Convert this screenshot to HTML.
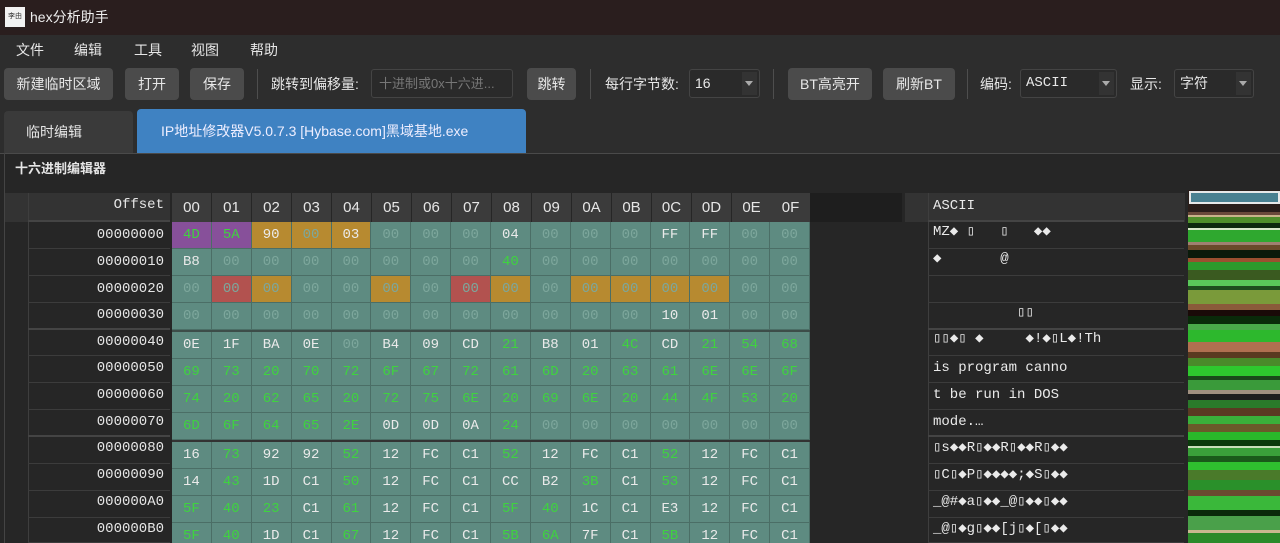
<!DOCTYPE html>
<html><head><meta charset="utf-8"><style>
*{margin:0;padding:0;box-sizing:border-box}
html,body{width:1280px;height:543px;overflow:hidden}
body{background:#2d2d2d;font-family:"Liberation Sans","Noto Sans CJK SC",sans-serif;color:#e6e6e6;position:relative}
.a{position:absolute}
.btn{position:absolute;top:68px;height:32px;background:#4b4b4b;border-radius:4px;font-size:14px;line-height:32px;text-align:center;color:#e8e8e8}
.sep{position:absolute;top:69px;width:1px;height:30px;background:#4e4e4e}
.lbl{position:absolute;top:68px;line-height:32px;font-size:14px;color:#e8e8e8}
.cb{position:absolute;top:69px;height:29px;background:#2a2a2a;border:1px solid #444;border-radius:3px;font-size:14px;line-height:27px;padding-left:5px;color:#e8e8e8}
.cb i{position:absolute;right:2px;top:2px;width:15px;height:23px;background:#333}
.cb i:after{content:"";position:absolute;left:3px;top:9px;border-left:4px solid transparent;border-right:4px solid transparent;border-top:5px solid #aaa}
.mono{font-family:"Liberation Mono","DejaVu Sans Mono",monospace}
#hex{position:absolute;left:172px;top:222px;width:638px}
.r{display:flex;height:27px}
.r div{width:40px;height:27px;background:#5e8b81;border-right:1px solid #4b6e66;border-bottom:1px solid #4b6e66;text-align:center;line-height:27px;font-size:14px;color:#eaeaea;font-family:"Liberation Mono",monospace}
.r .f{color:#7da79c}.r .g{color:#3fd33f}.r .p{background:#87509a}.r .o{background:#b78a30}.r .d{background:#b2524f}
.gap{height:2px;background:#3d4d49}
.hh{position:absolute;top:193px;height:29px;width:39px;background:#3b3b3b;text-align:center;line-height:29px;font-size:15px;color:#e6e6e6}
.off{position:absolute;left:28px;width:142px;text-align:right;font-size:14px;color:#e6e6e6;padding-right:6px;border-bottom:1px solid #3c3c3c}
.asc{position:absolute;left:928px;width:256px;font-size:14px;color:#eaeaea;padding-left:5px;border-bottom:1px solid #3c3c3c;white-space:pre}
</style></head><body>
<div class="a" style="left:0;top:0;width:1280px;height:35px;background:#2a1e1e"></div>
<div class="a" style="left:5px;top:7px;width:20px;height:20px;background:#f2f2f2;font-size:7px;color:#333;line-height:20px;text-align:center">李由</div>
<div class="a" style="left:30px;top:7px;font-size:14px;line-height:20px;color:#eee">hex分析助手</div>
<div class="a" style="top:41px;left:16px;font-size:14px;line-height:18px">文件</div>
<div class="a" style="top:41px;left:74px;font-size:14px;line-height:18px">编辑</div>
<div class="a" style="top:41px;left:134px;font-size:14px;line-height:18px">工具</div>
<div class="a" style="top:41px;left:191px;font-size:14px;line-height:18px">视图</div>
<div class="a" style="top:41px;left:250px;font-size:14px;line-height:18px">帮助</div>
<div class="btn" style="left:4px;width:109px">新建临时区域</div>
<div class="btn" style="left:125px;width:54px">打开</div>
<div class="btn" style="left:190px;width:54px">保存</div>
<div class="sep" style="left:257px"></div>
<div class="lbl" style="left:271px">跳转到偏移量:</div>
<div class="cb" style="left:371px;width:142px;color:#777;font-size:13px;padding-left:7px">十进制或0x十六进...</div>
<div class="btn" style="left:527px;width:49px">跳转</div>
<div class="sep" style="left:590px"></div>
<div class="lbl" style="left:605px">每行字节数:</div>
<div class="cb" style="left:689px;width:71px">16<i></i></div>
<div class="sep" style="left:773px"></div>
<div class="btn" style="left:788px;width:84px">BT高亮开</div>
<div class="btn" style="left:883px;width:72px">刷新BT</div>
<div class="sep" style="left:967px"></div>
<div class="lbl" style="left:980px">编码:</div>
<div class="cb mono" style="left:1020px;width:97px">ASCII<i></i></div>
<div class="lbl" style="left:1130px">显示:</div>
<div class="cb" style="left:1174px;width:80px">字符<i></i></div>
<div class="a" style="left:4px;top:111px;width:129px;height:42px;background:#3a3a3a;border-radius:4px 4px 0 0;font-size:14px;line-height:42px;padding-left:22px">临时编辑</div>
<div class="a" style="left:137px;top:109px;width:389px;height:44px;background:#3f82c2;border-radius:4px 4px 0 0;font-size:14px;line-height:44px;padding-left:24px;color:#eef">IP地址修改器V5.0.7.3 [Hybase.com]黑域基地.exe</div>
<div class="a" style="left:0;top:153px;width:1280px;height:390px;background:#262626;border-top:1px solid #4a4a4a"></div>
<div class="a" style="left:4px;top:153px;width:1px;height:390px;background:#444"></div>
<div class="a" style="left:15px;top:160px;font-size:13px;font-weight:bold;line-height:18px">十六进制编辑器</div>
<div class="a" style="left:5px;top:193px;width:165px;height:350px;background:#262626"></div>
<div class="a" style="left:5px;top:193px;width:165px;height:29px;background:#333"></div>
<div class="a" style="left:28px;top:193px;width:1px;height:350px;background:#3e3e3e"></div>
<div class="a" style="left:810px;top:193px;width:92px;height:29px;background:#1e1e1e"></div>
<div class="off mono" style="top:193px;height:29px;line-height:25px;border-bottom:2px solid #444">Offset</div>
<div class="off mono" style="top:222px;height:27px;line-height:27px">00000000</div>
<div class="off mono" style="top:249px;height:27px;line-height:27px">00000010</div>
<div class="off mono" style="top:276px;height:27px;line-height:27px">00000020</div>
<div class="off mono" style="top:303px;height:27px;line-height:24px;border-bottom:2px solid #444">00000030</div>
<div class="off mono" style="top:329px;height:27px;line-height:27px">00000040</div>
<div class="off mono" style="top:356px;height:27px;line-height:24px">00000050</div>
<div class="off mono" style="top:383px;height:27px;line-height:24px">00000060</div>
<div class="off mono" style="top:410px;height:27px;line-height:24px;border-bottom:2px solid #444">00000070</div>
<div class="off mono" style="top:437px;height:27px;line-height:22px">00000080</div>
<div class="off mono" style="top:464px;height:27px;line-height:22px">00000090</div>
<div class="off mono" style="top:491px;height:27px;line-height:22px">000000A0</div>
<div class="off mono" style="top:518px;height:25px;line-height:22px">000000B0</div>
<div class="hh" style="left:172px">00</div><div class="hh" style="left:212px">01</div><div class="hh" style="left:252px">02</div><div class="hh" style="left:292px">03</div><div class="hh" style="left:332px">04</div><div class="hh" style="left:372px">05</div><div class="hh" style="left:412px">06</div><div class="hh" style="left:452px">07</div><div class="hh" style="left:492px">08</div><div class="hh" style="left:532px">09</div><div class="hh" style="left:572px">0A</div><div class="hh" style="left:612px">0B</div><div class="hh" style="left:652px">0C</div><div class="hh" style="left:692px">0D</div><div class="hh" style="left:732px">0E</div><div class="hh" style="left:771px">0F</div>
<div id="hex">
<div class="r"><div class="p g">4D</div><div class="p g">5A</div><div class="o">90</div><div class="o f">00</div><div class="o">03</div><div class="f">00</div><div class="f">00</div><div class="f">00</div><div>04</div><div class="f">00</div><div class="f">00</div><div class="f">00</div><div>FF</div><div>FF</div><div class="f">00</div><div class="f">00</div></div>
<div class="r"><div>B8</div><div class="f">00</div><div class="f">00</div><div class="f">00</div><div class="f">00</div><div class="f">00</div><div class="f">00</div><div class="f">00</div><div class="g">40</div><div class="f">00</div><div class="f">00</div><div class="f">00</div><div class="f">00</div><div class="f">00</div><div class="f">00</div><div class="f">00</div></div>
<div class="r"><div class="f">00</div><div class="d f">00</div><div class="o f">00</div><div class="f">00</div><div class="f">00</div><div class="o f">00</div><div class="f">00</div><div class="d f">00</div><div class="o f">00</div><div class="f">00</div><div class="o f">00</div><div class="o f">00</div><div class="o f">00</div><div class="o f">00</div><div class="f">00</div><div class="f">00</div></div>
<div class="r"><div class="f">00</div><div class="f">00</div><div class="f">00</div><div class="f">00</div><div class="f">00</div><div class="f">00</div><div class="f">00</div><div class="f">00</div><div class="f">00</div><div class="f">00</div><div class="f">00</div><div class="f">00</div><div>10</div><div>01</div><div class="f">00</div><div class="f">00</div></div>
<div class="gap"></div>
<div class="r"><div>0E</div><div>1F</div><div>BA</div><div>0E</div><div class="f">00</div><div>B4</div><div>09</div><div>CD</div><div class="g">21</div><div>B8</div><div>01</div><div class="g">4C</div><div>CD</div><div class="g">21</div><div class="g">54</div><div class="g">68</div></div>
<div class="r"><div class="g">69</div><div class="g">73</div><div class="g">20</div><div class="g">70</div><div class="g">72</div><div class="g">6F</div><div class="g">67</div><div class="g">72</div><div class="g">61</div><div class="g">6D</div><div class="g">20</div><div class="g">63</div><div class="g">61</div><div class="g">6E</div><div class="g">6E</div><div class="g">6F</div></div>
<div class="r"><div class="g">74</div><div class="g">20</div><div class="g">62</div><div class="g">65</div><div class="g">20</div><div class="g">72</div><div class="g">75</div><div class="g">6E</div><div class="g">20</div><div class="g">69</div><div class="g">6E</div><div class="g">20</div><div class="g">44</div><div class="g">4F</div><div class="g">53</div><div class="g">20</div></div>
<div class="r"><div class="g">6D</div><div class="g">6F</div><div class="g">64</div><div class="g">65</div><div class="g">2E</div><div>0D</div><div>0D</div><div>0A</div><div class="g">24</div><div class="f">00</div><div class="f">00</div><div class="f">00</div><div class="f">00</div><div class="f">00</div><div class="f">00</div><div class="f">00</div></div>
<div class="gap" style="background:#333"></div>
<div class="r"><div>16</div><div class="g">73</div><div>92</div><div>92</div><div class="g">52</div><div>12</div><div>FC</div><div>C1</div><div class="g">52</div><div>12</div><div>FC</div><div>C1</div><div class="g">52</div><div>12</div><div>FC</div><div>C1</div></div>
<div class="r"><div>14</div><div class="g">43</div><div>1D</div><div>C1</div><div class="g">50</div><div>12</div><div>FC</div><div>C1</div><div>CC</div><div>B2</div><div class="g">3B</div><div>C1</div><div class="g">53</div><div>12</div><div>FC</div><div>C1</div></div>
<div class="r"><div class="g">5F</div><div class="g">40</div><div class="g">23</div><div>C1</div><div class="g">61</div><div>12</div><div>FC</div><div>C1</div><div class="g">5F</div><div class="g">40</div><div>1C</div><div>C1</div><div>E3</div><div>12</div><div>FC</div><div>C1</div></div>
<div class="r"><div class="g">5F</div><div class="g">40</div><div>1D</div><div>C1</div><div class="g">67</div><div>12</div><div>FC</div><div>C1</div><div class="g">5B</div><div class="g">6A</div><div>7F</div><div>C1</div><div class="g">5B</div><div>12</div><div>FC</div><div>C1</div></div>
</div>
<div class="a" style="left:905px;top:193px;width:280px;height:29px;background:#333"></div>
<div class="a" style="left:928px;top:193px;width:1px;height:350px;background:#3e3e3e"></div>
<div class="asc mono" style="top:193px;height:29px;line-height:26px;border-bottom:2px solid #444">ASCII</div>
<div class="asc mono" style="top:222px;height:27px;line-height:21px">MZ◆ ▯   ▯   ◆◆</div>
<div class="asc mono" style="top:249px;height:27px;line-height:21px">◆       @</div>
<div class="asc mono" style="top:276px;height:27px;line-height:21px"> </div>
<div class="asc mono" style="top:303px;height:27px;line-height:21px;border-bottom:2px solid #444">          ▯▯</div>
<div class="asc mono" style="top:329px;height:27px;line-height:21px">▯▯◆▯ ◆     ◆!◆▯L◆!Th</div>
<div class="asc mono" style="top:356px;height:27px;line-height:24px">is program canno</div>
<div class="asc mono" style="top:383px;height:27px;line-height:24px">t be run in DOS </div>
<div class="asc mono" style="top:410px;height:27px;line-height:24px;border-bottom:2px solid #444">mode.…</div>
<div class="asc mono" style="top:437px;height:27px;line-height:22px">▯s◆◆R▯◆◆R▯◆◆R▯◆◆</div>
<div class="asc mono" style="top:464px;height:27px;line-height:22px">▯C▯◆P▯◆◆◆◆;◆S▯◆◆</div>
<div class="asc mono" style="top:491px;height:27px;line-height:22px">_@#◆a▯◆◆_@▯◆◆▯◆◆</div>
<div class="asc mono" style="top:518px;height:25px;line-height:22px">_@▯◆g▯◆◆[j▯◆[▯◆◆</div>
<div class="a" style="left:1188px;top:190px;width:92px;height:353px;background:linear-gradient(180deg,#2a1e1a 0 22px,#6a4a3a 22px 25px,#c9b48a 25px 27px,#4f8f2a 27px 33px,#0d2a0d 33px 38px,#d8e8c8 38px 40px,#2fa82f 40px 52px,#a08070 52px 55px,#6a4a2a 55px 60px,#0a1a0a 60px 68px,#9a5030 68px 72px,#2c9a2c 72px 80px,#3a5a20 80px 90px,#5ac85a 90px 96px,#1e4e1e 96px 100px,#7a9a3a 100px 114px,#8a5a3a 114px 120px,#1a0a08 120px 126px,#0a2a0a 126px 134px,#4aa84a 134px 140px,#2db82d 140px 152px,#b07050 152px 162px,#5a3a20 162px 168px,#4a8a2a 168px 176px,#2ec82e 176px 186px,#1a4a1a 186px 190px,#3a9a3a 190px 200px,#a09080 200px 204px,#1e1e1e 204px 210px,#2a7a2a 210px 218px,#5a3a22 218px 226px,#3ab03a 226px 234px,#6a5a2a 234px 242px,#2ab82a 242px 250px,#0a3a0a 250px 256px,#c8e0b8 256px 258px,#3aa03a 258px 266px,#1a5a1a 266px 272px,#2fc02f 272px 280px,#4a7a2a 280px 290px,#2a902a 290px 300px,#6a4a30 300px 306px,#3ab83a 306px 320px,#0a2a0a 320px 326px,#4aa04a 326px 340px,#c8b890 340px 343px,#2a8a2a 343px 353px)"></div>
<div class="a" style="left:1189px;top:191px;width:91px;height:13px;background:#4a8090;border:2px solid #e8e8e8"></div>
</body></html>
